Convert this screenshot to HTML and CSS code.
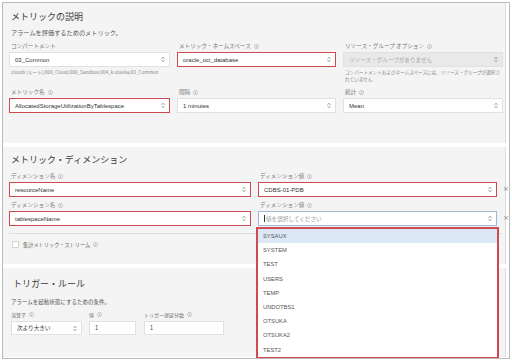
FILE: index.html
```html
<!DOCTYPE html>
<html lang="ja">
<head>
<meta charset="utf-8">
<link rel="stylesheet" href="styles.css">
</head>
<body>
<div class="frame">
  <section class="sec sec1">
    <h2 class="title">メトリックの説明</h2>
    <p class="sub">アラームを評価するためのメトリック。</p>
    <div class="grid3">
      <div class="field">
        <div class="label">コンパートメント</div>
        <div class="select"><span class="val">03_Common</span><svg class="arr" viewBox="0 0 4 7"><path d="M0.6 2.8 L2 1.3 L3.4 2.8 M0.6 4.2 L2 5.7 L3.4 4.2"/></svg></div>
        <div class="help">cloudx (ルート)/000_Cloud/000_Sandbox/004_k.otsuka/03_Common</div>
      </div>
      <div class="field">
        <div class="label">メトリック・ネームスペース <svg class="info" viewBox="0 0 6 6"><circle cx="3" cy="3" r="2.5"/><path d="M3 2.6 V4.6 M3 1.4 V1.9"/></svg></div>
        <div class="select red"><span class="val">oracle_oci_database</span><svg class="arr" viewBox="0 0 4 7"><path d="M0.6 2.8 L2 1.3 L3.4 2.8 M0.6 4.2 L2 5.7 L3.4 4.2"/></svg></div>
      </div>
      <div class="field">
        <div class="label">リソース・グループ オプション <svg class="info" viewBox="0 0 6 6"><circle cx="3" cy="3" r="2.5"/><path d="M3 2.6 V4.6 M3 1.4 V1.9"/></svg></div>
        <div class="select disabled"><span class="val">リソース・グループがありません</span><svg class="arr" viewBox="0 0 4 7"><path d="M0.6 2.8 L2 1.3 L3.4 2.8 M0.6 4.2 L2 5.7 L3.4 4.2"/></svg></div>
        <div class="help">コンパートメントおよびネームスペースには、リソース・グループが選択されていません</div>
      </div>
      <div class="field">
        <div class="label">メトリック名 <svg class="info" viewBox="0 0 6 6"><circle cx="3" cy="3" r="2.5"/><path d="M3 2.6 V4.6 M3 1.4 V1.9"/></svg></div>
        <div class="select red"><span class="val">AllocatedStorageUtilizationByTablespace</span><svg class="arr" viewBox="0 0 4 7"><path d="M0.6 2.8 L2 1.3 L3.4 2.8 M0.6 4.2 L2 5.7 L3.4 4.2"/></svg></div>
      </div>
      <div class="field">
        <div class="label">間隔 <svg class="info" viewBox="0 0 6 6"><circle cx="3" cy="3" r="2.5"/><path d="M3 2.6 V4.6 M3 1.4 V1.9"/></svg></div>
        <div class="select"><span class="val">1 minutes</span><svg class="arr" viewBox="0 0 4 7"><path d="M0.6 2.8 L2 1.3 L3.4 2.8 M0.6 4.2 L2 5.7 L3.4 4.2"/></svg></div>
      </div>
      <div class="field">
        <div class="label">統計 <svg class="info" viewBox="0 0 6 6"><circle cx="3" cy="3" r="2.5"/><path d="M3 2.6 V4.6 M3 1.4 V1.9"/></svg></div>
        <div class="select"><span class="val">Mean</span><svg class="arr" viewBox="0 0 4 7"><path d="M0.6 2.8 L2 1.3 L3.4 2.8 M0.6 4.2 L2 5.7 L3.4 4.2"/></svg></div>
      </div>
    </div>
  </section>

  <section class="sec sec2">
    <h2 class="title">メトリック・ディメンション</h2>
    <div class="grid2">
      <div class="field">
        <div class="label">ディメンション名 <svg class="info" viewBox="0 0 6 6"><circle cx="3" cy="3" r="2.5"/><path d="M3 2.6 V4.6 M3 1.4 V1.9"/></svg></div>
        <div class="select red"><span class="val">resourceName</span><svg class="arr" viewBox="0 0 4 7"><path d="M0.6 2.8 L2 1.3 L3.4 2.8 M0.6 4.2 L2 5.7 L3.4 4.2"/></svg></div>
      </div>
      <div class="field">
        <div class="label">ディメンション値 <svg class="info" viewBox="0 0 6 6"><circle cx="3" cy="3" r="2.5"/><path d="M3 2.6 V4.6 M3 1.4 V1.9"/></svg></div>
        <div class="select red"><span class="val">CDBS-01-PDB</span><svg class="arr" viewBox="0 0 4 7"><path d="M0.6 2.8 L2 1.3 L3.4 2.8 M0.6 4.2 L2 5.7 L3.4 4.2"/></svg></div>
      </div>
      <div class="xcell">×</div>
      <div class="field">
        <div class="label">ディメンション名 <svg class="info" viewBox="0 0 6 6"><circle cx="3" cy="3" r="2.5"/><path d="M3 2.6 V4.6 M3 1.4 V1.9"/></svg></div>
        <div class="select red"><span class="val">tablespaceName</span><svg class="arr" viewBox="0 0 4 7"><path d="M0.6 2.8 L2 1.3 L3.4 2.8 M0.6 4.2 L2 5.7 L3.4 4.2"/></svg></div>
      </div>
      <div class="field">
        <div class="label">ディメンション値 <svg class="info" viewBox="0 0 6 6"><circle cx="3" cy="3" r="2.5"/><path d="M3 2.6 V4.6 M3 1.4 V1.9"/></svg></div>
        <div class="select focus"><span class="cursor"></span><span class="val ph">値を選択してください</span><svg class="arr" viewBox="0 0 4 7"><path d="M0.6 2.8 L2 1.3 L3.4 2.8 M0.6 4.2 L2 5.7 L3.4 4.2"/></svg>
          <ul class="dropdown">
            <li class="hl">SYSAUX</li>
            <li>SYSTEM</li>
            <li>TEST</li>
            <li>USERS</li>
            <li>TEMP</li>
            <li>UNDOTBS1</li>
            <li>OTSUKA</li>
            <li>OTSUKA2</li>
            <li>TEST2</li>
          </ul>
        </div>
      </div>
      <div class="xcell">×</div>
    </div>
    <div class="sep"></div>
    <label class="check"><span class="box"></span>集計メトリック・ストリーム <svg class="info" viewBox="0 0 6 6"><circle cx="3" cy="3" r="2.5"/><path d="M3 2.6 V4.6 M3 1.4 V1.9"/></svg></label>
  </section>

  <section class="sec sec3">
    <h2 class="title">トリガー・ルール</h2>
    <p class="sub sub3">アラームを起動状態にするための条件。</p>
    <div class="row3">
      <div class="field f-op">
        <div class="label">演算子 <svg class="info" viewBox="0 0 6 6"><circle cx="3" cy="3" r="2.5"/><path d="M3 2.6 V4.6 M3 1.4 V1.9"/></svg></div>
        <div class="select sm"><span class="val">次より大きい</span><svg class="arr" viewBox="0 0 4 7"><path d="M0.6 2.8 L2 1.3 L3.4 2.8 M0.6 4.2 L2 5.7 L3.4 4.2"/></svg></div>
      </div>
      <div class="field f-val">
        <div class="label">値 <svg class="info" viewBox="0 0 6 6"><circle cx="3" cy="3" r="2.5"/><path d="M3 2.6 V4.6 M3 1.4 V1.9"/></svg></div>
        <div class="select sm"><span class="val">1</span></div>
      </div>
      <div class="field f-trig">
        <div class="label">トリガー遅延分数 <svg class="info" viewBox="0 0 6 6"><circle cx="3" cy="3" r="2.5"/><path d="M3 2.6 V4.6 M3 1.4 V1.9"/></svg></div>
        <div class="select sm"><span class="val">1</span></div>
      </div>
    </div>
  </section>
</div>
</body>
</html>
```

FILE: styles.css
```css
* { box-sizing: border-box; }
html, body { margin: 0; padding: 0; background: #fff; }
body {
  width: 512px; height: 363px; overflow: hidden;
  font-family: "Liberation Sans", "Noto Sans CJK JP", sans-serif;
  color: #333;
}
.frame {
  margin: 2px 0 0 2px;
  width: 508px; height: 357px;
  border: 1px solid #b9b9b9;
  background: #fff;
  overflow: hidden;
  display: flex; flex-direction: column;
}
.sec {
  background: #f4f4f4;
  margin-right: 3px;
  border-right: 1px solid #dcdcdc;
  flex: none;
}
.sec1 { height: 140px; padding: 6px 0 0 6px; }
.sec2 { height: 117px; margin-top: 4px; padding: 5px 0 0 6px; }
.sec3 { height: 89px; margin-top: 4px; padding: 8px 0 0 8px; }

.title {
  margin: 0 0 0 2px;
  font-family: "Noto Sans CJK JP", sans-serif;
  font-weight: 400; font-size: 9px; line-height: 16px; height: 16px;
  color: #3a3a3a;
}
.sub {
  margin: 3px 0 0 2px;
  font-family: "Noto Sans CJK JP", sans-serif;
  font-size: 6.2px; line-height: 10px; height: 10px;
  color: #555;
}
.sub3 { margin: 5px 0 0 0; font-size: 5.5px; }

.grid3 {
  margin-top: 3px;
  display: grid;
  grid-template-columns: 161px 159px 160px;
  column-gap: 7px;
  row-gap: 4px;
  align-items: start;
}
.field { display: flex; flex-direction: column; position: relative; }
.label {
  height: 10px; line-height: 10px; margin: 0 0 1px 2px;
  font-family: "Noto Sans CJK JP", sans-serif;
  font-size: 5.6px; color: #777;
  display: flex; align-items: center; gap: 0;
  white-space: nowrap;
}
.info { width: 5px; height: 5px; margin-left: 3px; }
.info circle { fill: none; stroke: #999; stroke-width: 0.6; }
.info path { stroke: #999; stroke-width: 0.7; fill: none; }

.select {
  position: relative;
  height: 15px;
  background: #fff;
  border: 1px solid #e1e1e1;
  display: flex; align-items: center;
  padding: 0 0 0 5px;
}
.select .val {
  font-size: 6px; color: #333; white-space: nowrap; flex: 1;
  font-family: "Liberation Sans", "Noto Sans CJK JP", sans-serif;
}
.select.red { border: 1.5px solid #cc4a50; }
.select.disabled { background: #e9e9e9; border-color: #e1e1e1; }
.select.disabled .val { color: #aaa; font-size: 5.6px; }
.select.focus { border: 1px solid #9dbad6; }
.select .ph { color: #999; font-size: 5.6px; }
.cursor { width: 1px; height: 7px; background: #333; margin-right: 1px; flex: none; }
.arr { width: 4px; height: 7px; margin-right: 4px; flex: none; }
.arr path { fill: none; stroke: #666; stroke-width: 0.7; }

.help {
  margin: 2px 0 0 2px;
  font-family: "Noto Sans CJK JP", sans-serif;
  font-size: 4.6px; line-height: 7px; color: #888;
}

.grid2 {
  margin-top: 3px;
  display: grid;
  grid-template-columns: 242px 239px 10px;
  column-gap: 7px;
  row-gap: 3px;
  align-items: end;
}
.xcell {
  height: 15px; line-height: 15px; font-size: 7px; color: #888;
  text-align: left; margin-left: -1px;
  font-family: "DejaVu Sans", sans-serif;
}
.sep { height: 1px; background: #dcdcdc; margin: 7px 3px 0 0; }
.check {
  display: flex; align-items: center;
  margin: 5px 0 0 3px; height: 10px;
  font-family: "Noto Sans CJK JP", sans-serif;
  font-size: 5.2px; color: #666;
}
.box {
  width: 7px; height: 7px; background: #fff; border: 1px solid #d4d4d4;
  margin-right: 4px;
}

.dropdown {
  position: absolute;
  top: calc(100% + 2px); left: -3px;
  width: 243px;
  margin: 0; padding: 0; list-style: none;
  background: #fff;
  border: 2px solid #cc4a50;
  z-index: 5;
}
.dropdown li {
  height: 14.2px; line-height: 14.2px;
  padding-left: 5px;
  font-size: 5.8px; color: #555;
  font-family: "Liberation Sans", sans-serif;
}
.dropdown li.hl { background: #dde8f6; }

.row3 { display: flex; margin-top: 2px; }
.f-op { width: 71px; }
.f-val { width: 47px; margin-left: 7px; }
.f-trig { width: 80px; margin-left: 8px; }
.row3 .label { margin-left: 0; font-size: 5px; height: 11px; line-height: 11px; }
.select.sm { height: 14px; }
.row3 .select .val { font-size: 5.6px; font-family: "Noto Sans CJK JP", sans-serif; }
```
